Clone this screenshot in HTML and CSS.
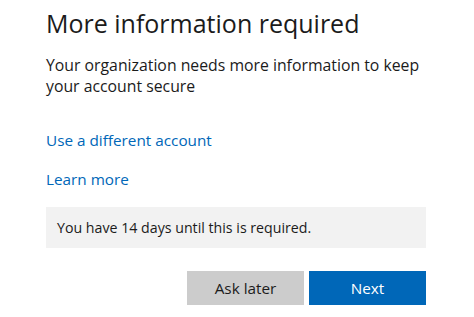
FILE: index.html
```html
<!DOCTYPE html>
<html lang="en">
<head>
    <meta charset="UTF-8">
    <meta name="viewport" content="width=device-width, initial-scale=1.0">
    <title>More information required</title>
    <link rel="stylesheet" href="styles.css">
</head>
<body>
    <div class="dialog">
        <h1 class="title">More information required</h1>
        <p class="desc">Your organization needs more information to keep your account secure</p>
        <a class="link link-first" href="#">Use a different account</a>
        <a class="link" href="#">Learn more</a>
        <div class="notice">You have 14 days until this is required.</div>
        <div class="actions">
            <button type="button" class="btn btn-later">Ask later</button>
            <button type="button" class="btn btn-next">Next</button>
        </div>
    </div>
</body>
</html>
```

FILE: styles.css
```css
body {
    margin: 0;
    background-color: #fff;
    font-family: "Open Sans", "Noto Sans", sans-serif;
    color: #1b1b1b;
}
.dialog {
    width: 380px;
    padding: 5px 0 0 46px;
}
.title {
    margin: 0;
    font-size: 25px;
    font-weight: 400;
    line-height: 36px;
}
.desc {
    margin: 14px 0 0;
    font-size: 15.8px;
    line-height: 21px;
}
.link {
    display: block;
    width: max-content;
    color: #0067b8;
    text-decoration: none;
    font-size: 15.3px;
    line-height: 21px;
    margin-top: 18px;
}
.link-first {
    margin-top: 33px;
}
.notice {
    margin-top: 17px;
    background-color: #f2f2f2;
    padding: 10px 11px;
    font-size: 14.2px;
    line-height: 21px;
}
.actions {
    display: flex;
    justify-content: flex-end;
    gap: 5px;
    margin-top: 23px;
}
.btn {
    width: 117px;
    height: 34px;
    border: none;
    font-family: inherit;
    font-size: 15.3px;
    cursor: pointer;
}
.btn-later {
    background-color: #ccc;
    color: #1b1b1b;
}
.btn-next {
    background-color: #0067b8;
    color: #fff;
}
```
